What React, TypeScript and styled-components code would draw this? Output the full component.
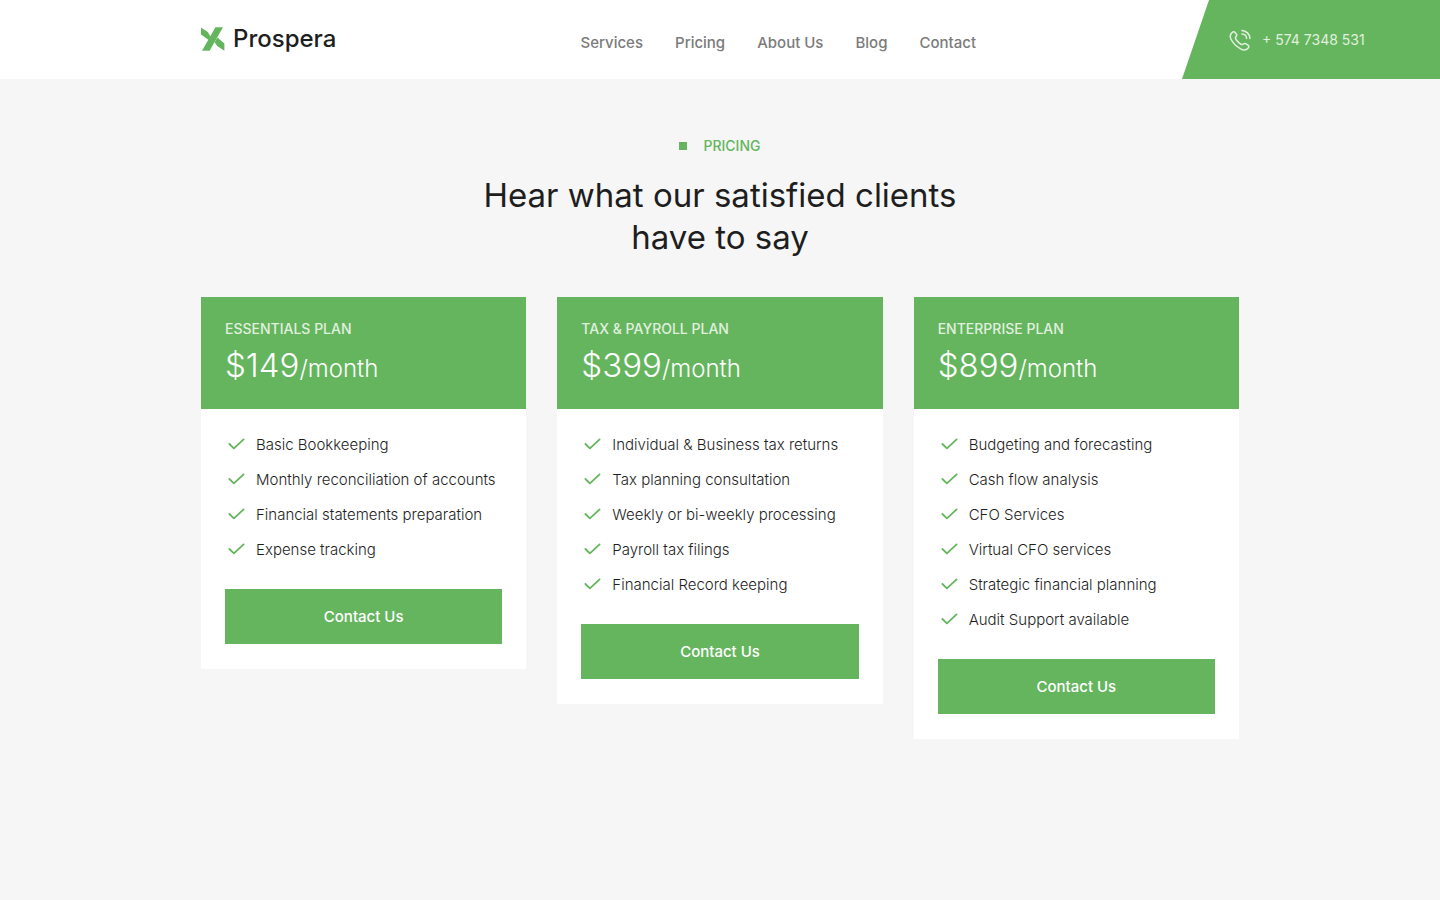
import React from "react";
import styled, { createGlobalStyle } from "styled-components";

const green = "#65b55e";
const ink = "#1e1e1e";

const GlobalStyle = createGlobalStyle`
  *, *::before, *::after { box-sizing: border-box; }
  body {
    margin: 0;
    background: #f6f6f6;
    color: ${ink};
    font-family: Inter, "Liberation Sans", sans-serif;
  }
`;

const Header = styled.header`
  display: flex;
  align-items: stretch;
  height: 79px;
  background: #fff;
`;

const Brand = styled.a`
  display: flex;
  align-items: center;
  gap: 8px;
  margin-left: max(24px, calc((100% - 1038px) / 2));
  padding-bottom: 2px;
  color: ${ink};
  font-size: 24px;
  font-weight: 500;
  line-height: 32px;
  text-decoration: none;
`;

const Nav = styled.nav`
  display: flex;
  align-items: center;
  gap: 32px;
  margin-left: auto;
  margin-right: 206px;
  padding-top: 6px;
`;

const NavLink = styled.a`
  color: #7b7b7b;
  font-size: 15px;
  font-weight: 500;
  line-height: 24px;
  text-decoration: none;
`;

const PhoneLink = styled.a`
  display: flex;
  align-items: center;
  gap: 11px;
  width: 258px;
  padding-left: 47px;
  background: ${green};
  clip-path: polygon(27px 0, 100% 0, 100% 100%, 0 100%);
  color: #e0f0df;
  font-size: 14px;
  line-height: 24px;
  text-decoration: none;
`;

const Main = styled.main`
  max-width: 1086px;
  margin: 0 auto;
  padding: 57px 24px 80px;
`;

const Eyebrow = styled.p`
  display: flex;
  align-items: center;
  justify-content: center;
  gap: 16px;
  margin: 0;
  color: ${green};
  font-size: 14px;
  font-weight: 500;
  line-height: 20px;

  &::before {
    content: "";
    width: 8px;
    height: 8px;
    background: ${green};
  }
`;

const Title = styled.h1`
  max-width: 540px;
  margin: 18px auto 39px;
  font-size: 33px;
  font-weight: 400;
  line-height: 42px;
  text-align: center;
`;

const Plans = styled.div`
  display: grid;
  grid-template-columns: repeat(3, 1fr);
  align-items: start;
  gap: 31px;
`;

const Card = styled.article`
  background: #fff;
`;

const CardHead = styled.div`
  padding: 22px 24px;
  background: ${green};
`;

const PlanName = styled.h2`
  margin: 0;
  color: #e0f0df;
  font-size: 14px;
  font-weight: 500;
  line-height: 20px;
`;

const Price = styled.p`
  margin: 5px 0 0;
  color: #fff;
  font-size: 33px;
  font-weight: 300;
  line-height: 43px;
`;

const Period = styled.span`
  font-size: 24px;
  line-height: 24px;
`;

const CardBody = styled.div`
  padding: 24px 24px 25px;
`;

const Features = styled.ul`
  display: grid;
  gap: 11px;
  margin: 0 0 27px;
  padding: 0;
  list-style: none;
`;

const Feature = styled.li`
  display: flex;
  align-items: center;
  gap: 7px;
  font-size: 15px;
  font-weight: 300;
  line-height: 24px;
  white-space: nowrap;
`;

const ContactButton = styled.button`
  display: block;
  width: 100%;
  height: 55px;
  border: 0;
  background: ${green};
  color: #fff;
  font: inherit;
  font-size: 15px;
  font-weight: 500;
  cursor: pointer;
`;

const LogoMark = () => (
  <svg width="24" height="24" viewBox="0 0 24 24" fill={green} aria-hidden="true">
    <path d="M14.4 0.3H22L8.6 23.7H1L7.3 12.8 0 7.4V0.4L6.8 4.9 9.3 9.2Z" />
    <path d="M16.4 10.6 23.4 16.4V23.7L16.2 19 13.6 15.2Z" />
  </svg>
);

const PhoneIcon = () => (
  <svg width="22" height="22" viewBox="0 0 22 22" fill="none" stroke="currentColor" strokeWidth="1.5" strokeLinecap="round" strokeLinejoin="round" aria-hidden="true">
    <path d="M3.2 3.4C4.2 2.4 5.4 2.6 6.2 3.6L7.3 5C8 6 7.8 6.8 7 7.6C6 8.6 6.2 9.4 7.4 11C8.6 12.6 10 14 11.6 15C13 15.8 13.6 15.8 14.4 15C15.2 14.2 16 14.2 17 14.8L19 16.2C20 17 20.1 18 19.2 19C17.4 21.2 15 21.6 11.6 19.8C7 17.4 3.6 13.6 1.8 9.8C0.7 7.2 1.2 5.2 3.2 3.4Z" />
    <path d="M12.8 1.4C17.3 1.6 20.8 5.2 21 9.4M13 5.1C15.6 5.3 17.5 7.1 17.6 9.4" />
  </svg>
);

const CheckIcon = () => (
  <svg width="24" height="24" viewBox="0 0 24 24" fill="none" stroke={green} strokeWidth="1.8" strokeLinecap="round" strokeLinejoin="round" aria-hidden="true">
    <path d="M4.4 11 8.9 15.4 18.6 6.4" />
  </svg>
);

const links = ["Services", "Pricing", "About Us", "Blog", "Contact"];

const plans = [
  {
    name: "ESSENTIALS PLAN",
    price: "$149",
    features: ["Basic Bookkeeping", "Monthly reconciliation of accounts", "Financial statements preparation", "Expense tracking"],
  },
  {
    name: "TAX & PAYROLL PLAN",
    price: "$399",
    features: ["Individual & Business tax returns", "Tax planning consultation", "Weekly or bi-weekly processing", "Payroll tax filings", "Financial Record keeping"],
  },
  {
    name: "ENTERPRISE PLAN",
    price: "$899",
    features: ["Budgeting and forecasting", "Cash flow analysis", "CFO Services", "Virtual CFO services", "Strategic financial planning", "Audit Support available"],
  },
];

export default function App() {
  return (
    <>
      <GlobalStyle />
      <Header>
        <Brand href="#">
          <LogoMark />
          Prospera
        </Brand>
        <Nav>
          {links.map((label) => (
            <NavLink key={label} href="#">{label}</NavLink>
          ))}
        </Nav>
        <PhoneLink href="tel:+5747348531">
          <PhoneIcon />
          + 574 7348 531
        </PhoneLink>
      </Header>
      <Main>
        <Eyebrow>PRICING</Eyebrow>
        <Title>Hear what our satisfied clients have to say</Title>
        <Plans>
          {plans.map((plan) => (
            <Card key={plan.name}>
              <CardHead>
                <PlanName>{plan.name}</PlanName>
                <Price>{plan.price}<Period>/month</Period></Price>
              </CardHead>
              <CardBody>
                <Features>
                  {plan.features.map((feature) => (
                    <Feature key={feature}>
                      <CheckIcon />
                      {feature}
                    </Feature>
                  ))}
                </Features>
                <ContactButton type="button">Contact Us</ContactButton>
              </CardBody>
            </Card>
          ))}
        </Plans>
      </Main>
    </>
  );
}
